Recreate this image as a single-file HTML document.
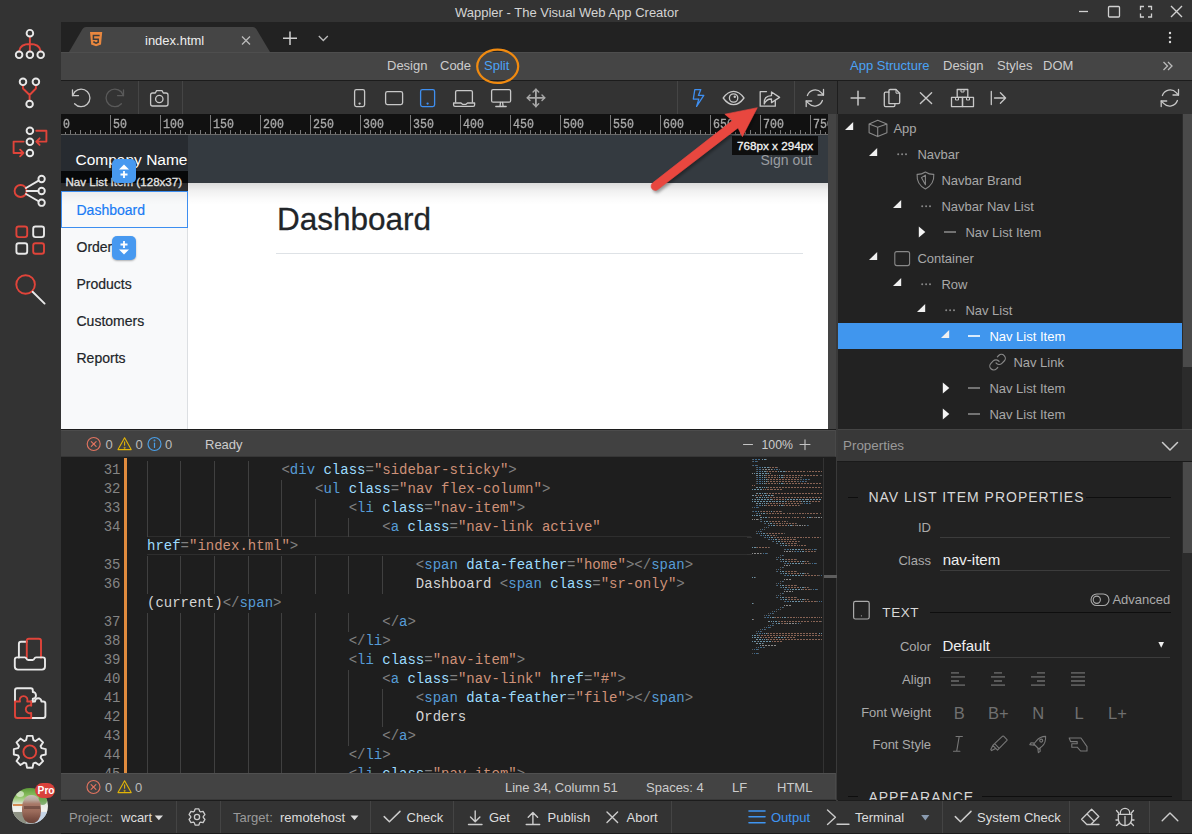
<!DOCTYPE html>
<html><head><meta charset="utf-8">
<style>
*{box-sizing:border-box;margin:0;padding:0}
html,body{width:1192px;height:834px;overflow:hidden;background:#333;font-family:"Liberation Sans",sans-serif;font-size:13px;color:#ccc}
.a{position:absolute}
.t{position:absolute;white-space:pre;line-height:13px}
svg{position:absolute;overflow:visible}
</style></head><body>

<!-- TITLE BAR -->
<div class="a" id="titlebar" style="left:0;top:0;width:1192px;height:22px;background:#333"></div>


<!-- LEFT BAR -->
<div class="a" id="leftbar" style="left:0;top:0;width:61px;height:834px;background:#333"></div>

<!-- TAB BAR -->
<div class="a" style="left:61px;top:22px;width:1131px;height:30px;background:#222"></div>

<!-- VIEW BAR -->
<div class="a" style="left:61px;top:52px;width:1131px;height:28px;background:#454545;border-top:1px solid #4e4e4e"></div>
<div class="a" style="left:61px;top:80px;width:1131px;height:1px;background:#1c1c1c"></div>

<!-- TOOLBAR -->
<div class="a" style="left:61px;top:81px;width:1131px;height:33px;background:#333"></div>

<!-- RULER -->
<div class="a" style="left:61px;top:114px;width:767px;height:21px;background:#111"></div>
<!-- design vscroll -->
<div class="a" style="left:828px;top:114px;width:9px;height:315px;background:#444"></div>


<!-- RULER CONTENT -->
<div class="a" style="left:61px;top:114px;width:767px;height:21px;overflow:hidden"><svg style="left:0;top:0" width="767" height="21" shape-rendering="crispEdges"><rect x="0" y="0" width="767" height="21" fill="#111"/><rect x="0" y="20" width="767" height="1" fill="#6a6a6a"/><path d="M4.5 18V20 M9.5 16V20 M14.5 18V20 M19.5 16V20 M24.5 18V20 M29.5 16V20 M34.5 18V20 M39.5 16V20 M44.5 18V20 M49.5 1V20 M54.5 18V20 M59.5 16V20 M64.5 18V20 M69.5 16V20 M74.5 18V20 M79.5 16V20 M84.5 18V20 M89.5 16V20 M94.5 18V20 M99.5 1V20 M104.5 18V20 M109.5 16V20 M114.5 18V20 M119.5 16V20 M124.5 18V20 M129.5 16V20 M134.5 18V20 M139.5 16V20 M144.5 18V20 M149.5 1V20 M154.5 18V20 M159.5 16V20 M164.5 18V20 M169.5 16V20 M174.5 18V20 M179.5 16V20 M184.5 18V20 M189.5 16V20 M194.5 18V20 M199.5 1V20 M204.5 18V20 M209.5 16V20 M214.5 18V20 M219.5 16V20 M224.5 18V20 M229.5 16V20 M234.5 18V20 M239.5 16V20 M244.5 18V20 M249.5 1V20 M254.5 18V20 M259.5 16V20 M264.5 18V20 M269.5 16V20 M274.5 18V20 M279.5 16V20 M284.5 18V20 M289.5 16V20 M294.5 18V20 M299.5 1V20 M304.5 18V20 M309.5 16V20 M314.5 18V20 M319.5 16V20 M324.5 18V20 M329.5 16V20 M334.5 18V20 M339.5 16V20 M344.5 18V20 M349.5 1V20 M354.5 18V20 M359.5 16V20 M364.5 18V20 M369.5 16V20 M374.5 18V20 M379.5 16V20 M384.5 18V20 M389.5 16V20 M394.5 18V20 M399.5 1V20 M404.5 18V20 M409.5 16V20 M414.5 18V20 M419.5 16V20 M424.5 18V20 M429.5 16V20 M434.5 18V20 M439.5 16V20 M444.5 18V20 M449.5 1V20 M454.5 18V20 M459.5 16V20 M464.5 18V20 M469.5 16V20 M474.5 18V20 M479.5 16V20 M484.5 18V20 M489.5 16V20 M494.5 18V20 M499.5 1V20 M504.5 18V20 M509.5 16V20 M514.5 18V20 M519.5 16V20 M524.5 18V20 M529.5 16V20 M534.5 18V20 M539.5 16V20 M544.5 18V20 M549.5 1V20 M554.5 18V20 M559.5 16V20 M564.5 18V20 M569.5 16V20 M574.5 18V20 M579.5 16V20 M584.5 18V20 M589.5 16V20 M594.5 18V20 M599.5 1V20 M604.5 18V20 M609.5 16V20 M614.5 18V20 M619.5 16V20 M624.5 18V20 M629.5 16V20 M634.5 18V20 M639.5 16V20 M644.5 18V20 M649.5 1V20 M654.5 18V20 M659.5 16V20 M664.5 18V20 M669.5 16V20 M674.5 18V20 M679.5 16V20 M684.5 18V20 M689.5 16V20 M694.5 18V20 M699.5 1V20 M704.5 18V20 M709.5 16V20 M714.5 18V20 M719.5 16V20 M724.5 18V20 M729.5 16V20 M734.5 18V20 M739.5 16V20 M744.5 18V20 M749.5 1V20 M754.5 18V20 M759.5 16V20 M764.5 18V20" stroke="#7a7a7a" stroke-width="1" fill="none"/></svg><div class="t" style="left:-61px;margin-left:63px;top:5.5px;font-family:'Liberation Mono',monospace;font-size:12.6px;line-height:10px;color:#a8a8a8;-webkit-text-stroke:0.35px #a8a8a8;transform:scaleX(0.92);transform-origin:0 0">0</div><div class="t" style="left:-61px;margin-left:113px;top:5.5px;font-family:'Liberation Mono',monospace;font-size:12.6px;line-height:10px;color:#a8a8a8;-webkit-text-stroke:0.35px #a8a8a8;transform:scaleX(0.92);transform-origin:0 0">50</div><div class="t" style="left:-61px;margin-left:163px;top:5.5px;font-family:'Liberation Mono',monospace;font-size:12.6px;line-height:10px;color:#a8a8a8;-webkit-text-stroke:0.35px #a8a8a8;transform:scaleX(0.92);transform-origin:0 0">100</div><div class="t" style="left:-61px;margin-left:213px;top:5.5px;font-family:'Liberation Mono',monospace;font-size:12.6px;line-height:10px;color:#a8a8a8;-webkit-text-stroke:0.35px #a8a8a8;transform:scaleX(0.92);transform-origin:0 0">150</div><div class="t" style="left:-61px;margin-left:263px;top:5.5px;font-family:'Liberation Mono',monospace;font-size:12.6px;line-height:10px;color:#a8a8a8;-webkit-text-stroke:0.35px #a8a8a8;transform:scaleX(0.92);transform-origin:0 0">200</div><div class="t" style="left:-61px;margin-left:313px;top:5.5px;font-family:'Liberation Mono',monospace;font-size:12.6px;line-height:10px;color:#a8a8a8;-webkit-text-stroke:0.35px #a8a8a8;transform:scaleX(0.92);transform-origin:0 0">250</div><div class="t" style="left:-61px;margin-left:363px;top:5.5px;font-family:'Liberation Mono',monospace;font-size:12.6px;line-height:10px;color:#a8a8a8;-webkit-text-stroke:0.35px #a8a8a8;transform:scaleX(0.92);transform-origin:0 0">300</div><div class="t" style="left:-61px;margin-left:413px;top:5.5px;font-family:'Liberation Mono',monospace;font-size:12.6px;line-height:10px;color:#a8a8a8;-webkit-text-stroke:0.35px #a8a8a8;transform:scaleX(0.92);transform-origin:0 0">350</div><div class="t" style="left:-61px;margin-left:463px;top:5.5px;font-family:'Liberation Mono',monospace;font-size:12.6px;line-height:10px;color:#a8a8a8;-webkit-text-stroke:0.35px #a8a8a8;transform:scaleX(0.92);transform-origin:0 0">400</div><div class="t" style="left:-61px;margin-left:513px;top:5.5px;font-family:'Liberation Mono',monospace;font-size:12.6px;line-height:10px;color:#a8a8a8;-webkit-text-stroke:0.35px #a8a8a8;transform:scaleX(0.92);transform-origin:0 0">450</div><div class="t" style="left:-61px;margin-left:563px;top:5.5px;font-family:'Liberation Mono',monospace;font-size:12.6px;line-height:10px;color:#a8a8a8;-webkit-text-stroke:0.35px #a8a8a8;transform:scaleX(0.92);transform-origin:0 0">500</div><div class="t" style="left:-61px;margin-left:613px;top:5.5px;font-family:'Liberation Mono',monospace;font-size:12.6px;line-height:10px;color:#a8a8a8;-webkit-text-stroke:0.35px #a8a8a8;transform:scaleX(0.92);transform-origin:0 0">550</div><div class="t" style="left:-61px;margin-left:663px;top:5.5px;font-family:'Liberation Mono',monospace;font-size:12.6px;line-height:10px;color:#a8a8a8;-webkit-text-stroke:0.35px #a8a8a8;transform:scaleX(0.92);transform-origin:0 0">600</div><div class="t" style="left:-61px;margin-left:713px;top:5.5px;font-family:'Liberation Mono',monospace;font-size:12.6px;line-height:10px;color:#a8a8a8;-webkit-text-stroke:0.35px #a8a8a8;transform:scaleX(0.92);transform-origin:0 0">650</div><div class="t" style="left:-61px;margin-left:763px;top:5.5px;font-family:'Liberation Mono',monospace;font-size:12.6px;line-height:10px;color:#a8a8a8;-webkit-text-stroke:0.35px #a8a8a8;transform:scaleX(0.92);transform-origin:0 0">700</div><div class="t" style="left:-61px;margin-left:813px;top:5.5px;font-family:'Liberation Mono',monospace;font-size:12.6px;line-height:10px;color:#a8a8a8;-webkit-text-stroke:0.35px #a8a8a8;transform:scaleX(0.92);transform-origin:0 0">750</div></div>
<!-- CANVAS -->
<div class="a" style="left:61px;top:135px;width:767px;height:294px;background:#fff;overflow:hidden">
  <div class="a" style="left:0;top:0;width:767px;height:48px;background:#343a40"></div>
  <div class="a" style="left:0;top:0;width:127px;height:48px;background:#272b30"></div>
  <div class="t" style="left:14.5px;top:16.5px;font-size:15.5px;line-height:15.5px;color:#fff">Company Name</div>
  <div class="t" style="left:699.5px;top:18px;font-size:14px;line-height:14px;color:#9a9da0">Sign out</div>
  <div class="a" style="left:0;top:48px;width:126px;height:246px;background:#f8f9fa;border-right:1px solid #dcdfe2;width:127px"></div>
  <div class="a" style="left:0;top:48px;width:767px;height:22px;background:linear-gradient(rgba(0,0,0,0.14),rgba(0,0,0,0.06) 35%,rgba(0,0,0,0.015) 75%,rgba(0,0,0,0))"></div>
  <div class="a" style="left:0;top:56px;width:127px;height:37px;border:1px solid #3d8ef0"></div>
  <div class="t" style="left:15.5px;top:68px;font-size:14px;line-height:14px;color:#1a7cf4;-webkit-text-stroke:0.2px #1a7cf4">Dashboard</div>
  <div class="t" style="left:15.5px;top:105px;font-size:14px;line-height:14px;color:#212529;-webkit-text-stroke:0.2px #212529">Orders</div>
  <div class="t" style="left:15.5px;top:142px;font-size:14px;line-height:14px;color:#212529;-webkit-text-stroke:0.2px #212529">Products</div>
  <div class="t" style="left:15.5px;top:179px;font-size:14px;line-height:14px;color:#212529;-webkit-text-stroke:0.2px #212529">Customers</div>
  <div class="t" style="left:15.5px;top:216px;font-size:14px;line-height:14px;color:#212529;-webkit-text-stroke:0.2px #212529">Reports</div>
  <div class="t" style="left:216px;top:68.5px;font-size:31.5px;line-height:31.5px;color:#212529;-webkit-text-stroke:0.3px #212529">Dashboard</div>
  <div class="a" style="left:215px;top:118px;width:527px;height:1px;background:#dee2e6"></div>
  <div class="a" style="left:0;top:36px;width:127px;height:20px;background:rgba(0,0,0,0.8)"></div>
  <div class="t" style="left:4.5px;top:40.8px;font-size:11.6px;line-height:11px;color:#e4e4e4;-webkit-text-stroke:0.3px #e4e4e4">Nav List Item (128x37)</div>
</div>
<!-- handles -->
<div class="a" style="left:112px;top:159px;width:24px;height:24px;border-radius:5px;background:#4799f0;box-shadow:0 1px 2px rgba(0,0,0,.3)"></div>
<div class="a" style="left:112px;top:236px;width:24px;height:24px;border-radius:5px;background:#4799f0;box-shadow:0 1px 2px rgba(0,0,0,.3)"></div>
<svg style="left:0;top:0" width="300" height="300">
  <path d="M119 169.5 L124 164.5 L129 169.5 Z" fill="#fff"/>
  <path d="M124 171 V178 M120.5 174.5 H127.5" stroke="#fff" stroke-width="1.8"/>
  <path d="M119 249.5 L124 254.5 L129 249.5 Z" fill="#fff"/>
  <path d="M124 241 V248 M120.5 244.5 H127.5" stroke="#fff" stroke-width="1.8"/>
</svg>
<!-- tooltip -->
<div class="a" style="left:732px;top:136px;width:86px;height:18.5px;background:#0e0e0e"></div>
<div class="t" style="left:737px;top:140.3px;font-size:11.7px;line-height:11px;color:#f4f4f4;-webkit-text-stroke:0.3px #f4f4f4">768px x 294px</div>


<!-- DESIGN STATUS -->
<div class="a" style="left:61px;top:429px;width:776px;height:1px;background:#1c1c1c"></div>
<div class="a" style="left:61px;top:430px;width:775px;height:27px;background:#414141;border-top:1px solid #4c4c4c;border-bottom:1px solid #363636;border-right:1px solid #484848"></div>
<div class="a" style="left:61px;top:457px;width:775px;height:1px;background:#3a3a3a"></div>

<!-- CODE -->
<div class="a" style="left:61px;top:457px;width:776px;height:316px;background:#1e1e1e"></div>
<!--CODESTART-->
<div class="a" style="left:61px;top:458px;width:762px;height:315px;overflow:hidden;background:#1e1e1e">
<div class="a" style="left:63px;top:0;width:3px;height:315px;background:#e08b3e"></div>
<div class="a" style="left:86px;top:78px;width:604px;height:19px;border-top:1px solid #2e2e2e;border-bottom:1px solid #2e2e2e"></div>
<div class="a" style="left:86px;top:3px;width:1px;height:19px;background:#404040"></div>
<div class="a" style="left:119px;top:3px;width:1px;height:19px;background:#404040"></div>
<div class="a" style="left:153px;top:3px;width:1px;height:19px;background:#404040"></div>
<div class="a" style="left:187px;top:3px;width:1px;height:19px;background:#404040"></div>
<div class="a" style="left:86px;top:22px;width:1px;height:19px;background:#404040"></div>
<div class="a" style="left:119px;top:22px;width:1px;height:19px;background:#404040"></div>
<div class="a" style="left:153px;top:22px;width:1px;height:19px;background:#404040"></div>
<div class="a" style="left:187px;top:22px;width:1px;height:19px;background:#404040"></div>
<div class="a" style="left:220px;top:22px;width:1px;height:19px;background:#404040"></div>
<div class="a" style="left:86px;top:41px;width:1px;height:19px;background:#404040"></div>
<div class="a" style="left:119px;top:41px;width:1px;height:19px;background:#404040"></div>
<div class="a" style="left:153px;top:41px;width:1px;height:19px;background:#404040"></div>
<div class="a" style="left:187px;top:41px;width:1px;height:19px;background:#404040"></div>
<div class="a" style="left:220px;top:41px;width:1px;height:19px;background:#404040"></div>
<div class="a" style="left:254px;top:41px;width:1px;height:19px;background:#404040"></div>
<div class="a" style="left:86px;top:60px;width:1px;height:19px;background:#404040"></div>
<div class="a" style="left:119px;top:60px;width:1px;height:19px;background:#404040"></div>
<div class="a" style="left:153px;top:60px;width:1px;height:19px;background:#404040"></div>
<div class="a" style="left:187px;top:60px;width:1px;height:19px;background:#404040"></div>
<div class="a" style="left:220px;top:60px;width:1px;height:19px;background:#404040"></div>
<div class="a" style="left:254px;top:60px;width:1px;height:19px;background:#404040"></div>
<div class="a" style="left:287px;top:60px;width:1px;height:19px;background:#404040"></div>
<div class="a" style="left:86px;top:98px;width:1px;height:19px;background:#404040"></div>
<div class="a" style="left:119px;top:98px;width:1px;height:19px;background:#404040"></div>
<div class="a" style="left:153px;top:98px;width:1px;height:19px;background:#404040"></div>
<div class="a" style="left:187px;top:98px;width:1px;height:19px;background:#404040"></div>
<div class="a" style="left:220px;top:98px;width:1px;height:19px;background:#404040"></div>
<div class="a" style="left:254px;top:98px;width:1px;height:19px;background:#404040"></div>
<div class="a" style="left:287px;top:98px;width:1px;height:19px;background:#404040"></div>
<div class="a" style="left:321px;top:98px;width:1px;height:19px;background:#404040"></div>
<div class="a" style="left:86px;top:117px;width:1px;height:19px;background:#404040"></div>
<div class="a" style="left:119px;top:117px;width:1px;height:19px;background:#404040"></div>
<div class="a" style="left:153px;top:117px;width:1px;height:19px;background:#404040"></div>
<div class="a" style="left:187px;top:117px;width:1px;height:19px;background:#404040"></div>
<div class="a" style="left:220px;top:117px;width:1px;height:19px;background:#404040"></div>
<div class="a" style="left:254px;top:117px;width:1px;height:19px;background:#404040"></div>
<div class="a" style="left:287px;top:117px;width:1px;height:19px;background:#404040"></div>
<div class="a" style="left:321px;top:117px;width:1px;height:19px;background:#404040"></div>
<div class="a" style="left:86px;top:155px;width:1px;height:19px;background:#404040"></div>
<div class="a" style="left:119px;top:155px;width:1px;height:19px;background:#404040"></div>
<div class="a" style="left:153px;top:155px;width:1px;height:19px;background:#404040"></div>
<div class="a" style="left:187px;top:155px;width:1px;height:19px;background:#404040"></div>
<div class="a" style="left:220px;top:155px;width:1px;height:19px;background:#404040"></div>
<div class="a" style="left:254px;top:155px;width:1px;height:19px;background:#404040"></div>
<div class="a" style="left:287px;top:155px;width:1px;height:19px;background:#404040"></div>
<div class="a" style="left:86px;top:174px;width:1px;height:19px;background:#404040"></div>
<div class="a" style="left:119px;top:174px;width:1px;height:19px;background:#404040"></div>
<div class="a" style="left:153px;top:174px;width:1px;height:19px;background:#404040"></div>
<div class="a" style="left:187px;top:174px;width:1px;height:19px;background:#404040"></div>
<div class="a" style="left:220px;top:174px;width:1px;height:19px;background:#404040"></div>
<div class="a" style="left:254px;top:174px;width:1px;height:19px;background:#404040"></div>
<div class="a" style="left:86px;top:193px;width:1px;height:19px;background:#404040"></div>
<div class="a" style="left:119px;top:193px;width:1px;height:19px;background:#404040"></div>
<div class="a" style="left:153px;top:193px;width:1px;height:19px;background:#404040"></div>
<div class="a" style="left:187px;top:193px;width:1px;height:19px;background:#404040"></div>
<div class="a" style="left:220px;top:193px;width:1px;height:19px;background:#404040"></div>
<div class="a" style="left:254px;top:193px;width:1px;height:19px;background:#404040"></div>
<div class="a" style="left:86px;top:212px;width:1px;height:19px;background:#404040"></div>
<div class="a" style="left:119px;top:212px;width:1px;height:19px;background:#404040"></div>
<div class="a" style="left:153px;top:212px;width:1px;height:19px;background:#404040"></div>
<div class="a" style="left:187px;top:212px;width:1px;height:19px;background:#404040"></div>
<div class="a" style="left:220px;top:212px;width:1px;height:19px;background:#404040"></div>
<div class="a" style="left:254px;top:212px;width:1px;height:19px;background:#404040"></div>
<div class="a" style="left:287px;top:212px;width:1px;height:19px;background:#404040"></div>
<div class="a" style="left:86px;top:231px;width:1px;height:19px;background:#404040"></div>
<div class="a" style="left:119px;top:231px;width:1px;height:19px;background:#404040"></div>
<div class="a" style="left:153px;top:231px;width:1px;height:19px;background:#404040"></div>
<div class="a" style="left:187px;top:231px;width:1px;height:19px;background:#404040"></div>
<div class="a" style="left:220px;top:231px;width:1px;height:19px;background:#404040"></div>
<div class="a" style="left:254px;top:231px;width:1px;height:19px;background:#404040"></div>
<div class="a" style="left:287px;top:231px;width:1px;height:19px;background:#404040"></div>
<div class="a" style="left:321px;top:231px;width:1px;height:19px;background:#404040"></div>
<div class="a" style="left:86px;top:250px;width:1px;height:19px;background:#404040"></div>
<div class="a" style="left:119px;top:250px;width:1px;height:19px;background:#404040"></div>
<div class="a" style="left:153px;top:250px;width:1px;height:19px;background:#404040"></div>
<div class="a" style="left:187px;top:250px;width:1px;height:19px;background:#404040"></div>
<div class="a" style="left:220px;top:250px;width:1px;height:19px;background:#404040"></div>
<div class="a" style="left:254px;top:250px;width:1px;height:19px;background:#404040"></div>
<div class="a" style="left:287px;top:250px;width:1px;height:19px;background:#404040"></div>
<div class="a" style="left:321px;top:250px;width:1px;height:19px;background:#404040"></div>
<div class="a" style="left:86px;top:269px;width:1px;height:19px;background:#404040"></div>
<div class="a" style="left:119px;top:269px;width:1px;height:19px;background:#404040"></div>
<div class="a" style="left:153px;top:269px;width:1px;height:19px;background:#404040"></div>
<div class="a" style="left:187px;top:269px;width:1px;height:19px;background:#404040"></div>
<div class="a" style="left:220px;top:269px;width:1px;height:19px;background:#404040"></div>
<div class="a" style="left:254px;top:269px;width:1px;height:19px;background:#404040"></div>
<div class="a" style="left:287px;top:269px;width:1px;height:19px;background:#404040"></div>
<div class="a" style="left:86px;top:288px;width:1px;height:19px;background:#404040"></div>
<div class="a" style="left:119px;top:288px;width:1px;height:19px;background:#404040"></div>
<div class="a" style="left:153px;top:288px;width:1px;height:19px;background:#404040"></div>
<div class="a" style="left:187px;top:288px;width:1px;height:19px;background:#404040"></div>
<div class="a" style="left:220px;top:288px;width:1px;height:19px;background:#404040"></div>
<div class="a" style="left:254px;top:288px;width:1px;height:19px;background:#404040"></div>
<div class="a" style="left:86px;top:307px;width:1px;height:19px;background:#404040"></div>
<div class="a" style="left:119px;top:307px;width:1px;height:19px;background:#404040"></div>
<div class="a" style="left:153px;top:307px;width:1px;height:19px;background:#404040"></div>
<div class="a" style="left:187px;top:307px;width:1px;height:19px;background:#404040"></div>
<div class="a" style="left:220px;top:307px;width:1px;height:19px;background:#404040"></div>
<div class="a" style="left:254px;top:307px;width:1px;height:19px;background:#404040"></div>
<div class="t" style="left:0;width:59.5px;text-align:right;top:3px;line-height:19px;font-family:'Liberation Mono',monospace;font-size:14px;color:#858585">31</div>
<div class="t" style="left:86px;top:3px;line-height:19px;font-family:'Liberation Mono',monospace;font-size:14px">                <span style="color:#808080">&lt;</span><span style="color:#569cd6">div</span> <span style="color:#9cdcfe">class</span><span style="color:#808080">=</span><span style="color:#ce9178">&quot;sidebar-sticky&quot;</span><span style="color:#808080">&gt;</span></div>
<div class="t" style="left:0;width:59.5px;text-align:right;top:22px;line-height:19px;font-family:'Liberation Mono',monospace;font-size:14px;color:#858585">32</div>
<div class="t" style="left:86px;top:22px;line-height:19px;font-family:'Liberation Mono',monospace;font-size:14px">                    <span style="color:#808080">&lt;</span><span style="color:#569cd6">ul</span> <span style="color:#9cdcfe">class</span><span style="color:#808080">=</span><span style="color:#ce9178">&quot;nav flex-column&quot;</span><span style="color:#808080">&gt;</span></div>
<div class="t" style="left:0;width:59.5px;text-align:right;top:41px;line-height:19px;font-family:'Liberation Mono',monospace;font-size:14px;color:#858585">33</div>
<div class="t" style="left:86px;top:41px;line-height:19px;font-family:'Liberation Mono',monospace;font-size:14px">                        <span style="color:#808080">&lt;</span><span style="color:#569cd6">li</span> <span style="color:#9cdcfe">class</span><span style="color:#808080">=</span><span style="color:#ce9178">&quot;nav-item&quot;</span><span style="color:#808080">&gt;</span></div>
<div class="t" style="left:0;width:59.5px;text-align:right;top:60px;line-height:19px;font-family:'Liberation Mono',monospace;font-size:14px;color:#858585">34</div>
<div class="t" style="left:86px;top:60px;line-height:19px;font-family:'Liberation Mono',monospace;font-size:14px">                            <span style="color:#808080">&lt;</span><span style="color:#569cd6">a</span> <span style="color:#9cdcfe">class</span><span style="color:#808080">=</span><span style="color:#ce9178">&quot;nav-link active&quot;</span></div>
<div class="t" style="left:86px;top:79px;line-height:19px;font-family:'Liberation Mono',monospace;font-size:14px"><span style="color:#9cdcfe">href</span><span style="color:#808080">=</span><span style="color:#ce9178">&quot;index.html&quot;</span><span style="color:#808080">&gt;</span></div>
<div class="t" style="left:0;width:59.5px;text-align:right;top:98px;line-height:19px;font-family:'Liberation Mono',monospace;font-size:14px;color:#858585">35</div>
<div class="t" style="left:86px;top:98px;line-height:19px;font-family:'Liberation Mono',monospace;font-size:14px">                                <span style="color:#808080">&lt;</span><span style="color:#569cd6">span</span> <span style="color:#9cdcfe">data-feather</span><span style="color:#808080">=</span><span style="color:#ce9178">&quot;home&quot;</span><span style="color:#808080">&gt;</span><span style="color:#808080">&lt;/</span><span style="color:#569cd6">span</span><span style="color:#808080">&gt;</span></div>
<div class="t" style="left:0;width:59.5px;text-align:right;top:117px;line-height:19px;font-family:'Liberation Mono',monospace;font-size:14px;color:#858585">36</div>
<div class="t" style="left:86px;top:117px;line-height:19px;font-family:'Liberation Mono',monospace;font-size:14px">                                <span style="color:#d4d4d4">Dashboard </span><span style="color:#808080">&lt;</span><span style="color:#569cd6">span</span> <span style="color:#9cdcfe">class</span><span style="color:#808080">=</span><span style="color:#ce9178">&quot;sr-only&quot;</span><span style="color:#808080">&gt;</span></div>
<div class="t" style="left:86px;top:136px;line-height:19px;font-family:'Liberation Mono',monospace;font-size:14px"><span style="color:#d4d4d4">(current)</span><span style="color:#808080">&lt;/</span><span style="color:#569cd6">span</span><span style="color:#808080">&gt;</span></div>
<div class="t" style="left:0;width:59.5px;text-align:right;top:155px;line-height:19px;font-family:'Liberation Mono',monospace;font-size:14px;color:#858585">37</div>
<div class="t" style="left:86px;top:155px;line-height:19px;font-family:'Liberation Mono',monospace;font-size:14px">                            <span style="color:#808080">&lt;/</span><span style="color:#569cd6">a</span><span style="color:#808080">&gt;</span></div>
<div class="t" style="left:0;width:59.5px;text-align:right;top:174px;line-height:19px;font-family:'Liberation Mono',monospace;font-size:14px;color:#858585">38</div>
<div class="t" style="left:86px;top:174px;line-height:19px;font-family:'Liberation Mono',monospace;font-size:14px">                        <span style="color:#808080">&lt;/</span><span style="color:#569cd6">li</span><span style="color:#808080">&gt;</span></div>
<div class="t" style="left:0;width:59.5px;text-align:right;top:193px;line-height:19px;font-family:'Liberation Mono',monospace;font-size:14px;color:#858585">39</div>
<div class="t" style="left:86px;top:193px;line-height:19px;font-family:'Liberation Mono',monospace;font-size:14px">                        <span style="color:#808080">&lt;</span><span style="color:#569cd6">li</span> <span style="color:#9cdcfe">class</span><span style="color:#808080">=</span><span style="color:#ce9178">&quot;nav-item&quot;</span><span style="color:#808080">&gt;</span></div>
<div class="t" style="left:0;width:59.5px;text-align:right;top:212px;line-height:19px;font-family:'Liberation Mono',monospace;font-size:14px;color:#858585">40</div>
<div class="t" style="left:86px;top:212px;line-height:19px;font-family:'Liberation Mono',monospace;font-size:14px">                            <span style="color:#808080">&lt;</span><span style="color:#569cd6">a</span> <span style="color:#9cdcfe">class</span><span style="color:#808080">=</span><span style="color:#ce9178">&quot;nav-link&quot;</span> <span style="color:#9cdcfe">href</span><span style="color:#808080">=</span><span style="color:#ce9178">&quot;#&quot;</span><span style="color:#808080">&gt;</span></div>
<div class="t" style="left:0;width:59.5px;text-align:right;top:231px;line-height:19px;font-family:'Liberation Mono',monospace;font-size:14px;color:#858585">41</div>
<div class="t" style="left:86px;top:231px;line-height:19px;font-family:'Liberation Mono',monospace;font-size:14px">                                <span style="color:#808080">&lt;</span><span style="color:#569cd6">span</span> <span style="color:#9cdcfe">data-feather</span><span style="color:#808080">=</span><span style="color:#ce9178">&quot;file&quot;</span><span style="color:#808080">&gt;</span><span style="color:#808080">&lt;/</span><span style="color:#569cd6">span</span><span style="color:#808080">&gt;</span></div>
<div class="t" style="left:0;width:59.5px;text-align:right;top:250px;line-height:19px;font-family:'Liberation Mono',monospace;font-size:14px;color:#858585">42</div>
<div class="t" style="left:86px;top:250px;line-height:19px;font-family:'Liberation Mono',monospace;font-size:14px">                                <span style="color:#d4d4d4">Orders</span></div>
<div class="t" style="left:0;width:59.5px;text-align:right;top:269px;line-height:19px;font-family:'Liberation Mono',monospace;font-size:14px;color:#858585">43</div>
<div class="t" style="left:86px;top:269px;line-height:19px;font-family:'Liberation Mono',monospace;font-size:14px">                            <span style="color:#808080">&lt;/</span><span style="color:#569cd6">a</span><span style="color:#808080">&gt;</span></div>
<div class="t" style="left:0;width:59.5px;text-align:right;top:288px;line-height:19px;font-family:'Liberation Mono',monospace;font-size:14px;color:#858585">44</div>
<div class="t" style="left:86px;top:288px;line-height:19px;font-family:'Liberation Mono',monospace;font-size:14px">                        <span style="color:#808080">&lt;/</span><span style="color:#569cd6">li</span><span style="color:#808080">&gt;</span></div>
<div class="t" style="left:0;width:59.5px;text-align:right;top:307px;line-height:19px;font-family:'Liberation Mono',monospace;font-size:14px;color:#858585">45</div>
<div class="t" style="left:86px;top:307px;line-height:19px;font-family:'Liberation Mono',monospace;font-size:14px">                        <span style="color:#808080">&lt;</span><span style="color:#569cd6">li</span> <span style="color:#9cdcfe">class</span><span style="color:#808080">=</span><span style="color:#ce9178">&quot;nav-item&quot;</span><span style="color:#808080">&gt;</span></div>
</div>
<!--CODEEND-->


<!-- CODE STATUS -->
<div class="a" style="left:61px;top:773px;width:775px;height:27px;background:#434343;border-top:1px solid #505050;border-bottom:1px solid #383838;border-right:1px solid #4a4a4a"></div>

<!-- BOTTOM BAR -->
<div class="a" style="left:61px;top:800px;width:1131px;height:1px;background:#1c1c1c"></div>
<div class="a" style="left:61px;top:801px;width:1131px;height:33px;background:#333"></div>
<div class="a" style="left:61px;top:833px;width:1131px;height:1px;background:#1c1c1c"></div>

<!-- RIGHT PANEL -->
<div class="a" style="left:837px;top:114px;width:355px;height:315px;background:#222"></div>
<div class="a" style="left:836px;top:114px;width:2px;height:687px;background:#3a3a3a"></div>
<div class="a" style="left:838px;top:429px;width:354px;height:33px;background:#383838"></div>
<div class="a" style="left:837px;top:462px;width:355px;height:338px;background:#222"></div>


<!-- TOP CONTENT -->
<div class="t" style="left:455px;top:6px;color:#d4d4d4">Wappler - The Visual Web App Creator</div>
<svg style="left:0;top:0" width="1192" height="60" fill="none" stroke="#d0d0d0" stroke-width="1.3">
  <line x1="1079" y1="11.5" x2="1088" y2="11.5"/>
  <rect x="1108.5" y="6.5" width="11" height="10.5" rx="1"/>
  <path d="M1140.5 10 V6.5 H1144 M1148 6.5 H1151.5 V10 M1151.5 13.5 V17 H1148 M1144 17 H1140.5 V13.5"/>
  <path d="M1171 6 L1182 17 M1182 6 L1171 17" stroke-width="1.4"/>
  <!-- tab -->
  <path d="M69 52 L82.5 29 Q83.8 27 86 27 L253 27 Q255 27 256.3 29 L270 52 Z" fill="#454545" stroke="none"/>
  <!-- html5 icon -->
  <path d="M90 32 H102.2 L101 44.5 L96.1 46.2 L91.2 44.5 Z" fill="#e8873f" stroke="none"/>
  <path d="M99.6 35.4 H93.4 V39.2 H98.2 V42.3 L96.1 43.1 L94 42.3 V41.3" stroke="#3c3c3c" stroke-width="1.5"/>
  <path d="M242 36.5 L250 44.5 M250 36.5 L242 44.5" stroke="#bbb" stroke-width="1.3"/>
  <path d="M290 31.5 V45 M283 38.2 H297" stroke="#d0d0d0" stroke-width="1.5"/>
  <path d="M318.8 36 L323.3 40.5 L327.8 36" stroke="#bbb" stroke-width="1.3"/>
  <circle cx="1170" cy="33" r="1.2" fill="#ddd" stroke="none"/>
  <circle cx="1170" cy="37.6" r="1.2" fill="#ddd" stroke="none"/>
  <circle cx="1170" cy="42" r="1.2" fill="#ddd" stroke="none"/>
</svg>
<div class="t" style="left:145px;top:34px;color:#eee">index.html</div>

<!-- view bar text -->
<div class="t" style="left:387px;top:59px;color:#ccc">Design</div>
<div class="t" style="left:440px;top:59px;color:#ccc">Code</div>
<div class="t" style="left:484px;top:59px;color:#4ba3f5">Split</div>
<div class="t" style="left:850px;top:59px;color:#4ba3f5">App Structure</div>
<div class="t" style="left:943px;top:59px;color:#ccc">Design</div>
<div class="t" style="left:997px;top:59px;color:#ccc">Styles</div>
<div class="t" style="left:1043px;top:59px;color:#ccc">DOM</div>
<svg style="left:0;top:0" width="1192" height="120" fill="none" stroke="#ccc" stroke-width="1.3">
  <path d="M1163.5 62 L1167.5 66 L1163.5 70 M1168 62 L1172 66 L1168 70" stroke="#bbb"/>
  <ellipse cx="497.7" cy="66.3" rx="20.5" ry="16.6" stroke="#f08a10" stroke-width="2.2"/>
</svg>


<!-- TOOLBAR ICONS -->
<svg style="left:0;top:0" width="1192" height="120" fill="none" stroke="#c8c8c8" stroke-width="1.3" stroke-linecap="round" stroke-linejoin="round">
  <g stroke="#454545" stroke-width="1" stroke-linecap="butt">
    <line x1="138.5" y1="81" x2="138.5" y2="114"/>
    <line x1="182.5" y1="81" x2="182.5" y2="114"/>
    <line x1="677.5" y1="81" x2="677.5" y2="114"/>
    <line x1="794.5" y1="81" x2="794.5" y2="114"/>
  </g>
  <line x1="837.5" y1="81" x2="837.5" y2="114" stroke="#1e1e1e" stroke-width="1" stroke-linecap="butt"/>
  <!-- undo -->
  <path d="M72.5 89.8 V95.6 H78.5"/>
  <path d="M74.6 103.8 A8.8 8.8 0 1 0 74.8 91.8 L72.5 95.6"/>
  <!-- redo -->
  <g stroke="#5a5a5a">
  <path d="M123.5 89.8 V95.6 H117.5"/>
  <path d="M121.4 103.8 A8.8 8.8 0 1 1 121.2 91.8 L123.5 95.6"/>
  </g>
  <!-- camera -->
  <path d="M150.6 95 Q150.6 93 152.6 93 H155.3 L156.6 90.6 H162 L163.3 93 H166 Q168 93 168 95 V104 Q168 106 166 106 H152.6 Q150.6 106 150.6 104 Z"/>
  <circle cx="159.3" cy="99" r="3.7"/>
  <!-- devices -->
  <rect x="354.6" y="89.6" width="10" height="17" rx="1.8"/>
  <circle cx="359.6" cy="103.6" r="0.5" fill="#c8c8c8"/>
  <rect x="385.6" y="91.6" width="17" height="13" rx="1.8"/>
  <rect x="420.6" y="89.6" width="14" height="17" rx="1.8" stroke="#3f8ff0"/>
  <circle cx="427.6" cy="103.6" r="0.5" fill="#3f8ff0" stroke="#3f8ff0"/>
  <path d="M455.6 102 V92 Q455.6 90.6 457 90.6 H471 Q472.4 90.6 472.4 92 V102"/>
  <path d="M453.6 103 H461 L462.5 104.3 H466 L467.5 103 H474.6 V105 Q474.6 106.4 473.2 106.4 H455 Q453.6 106.4 453.6 105 Z"/>
  <rect x="491.6" y="89.6" width="19" height="12.6" rx="1.5"/>
  <path d="M500.5 102.4 L500 106.3 M502.6 102.4 L503.1 106.3 M495.8 106.5 H506.2"/>
  <g stroke="#a8a8a8" stroke-width="1.8">
  <path d="M527.5 97.8 H544.5 M535.9 89.5 V106.5"/>
  <path d="M530 95 L527.3 97.8 L530 100.6 M542 95 L544.7 97.8 L542 100.6 M533.1 92 L535.9 89.3 L538.7 92 M533.1 103.8 L535.9 106.6 L538.7 103.8" stroke-width="1.4"/>
  </g>
  <!-- zap -->
  <path d="M694.8 89.6 H700.8 L698.4 95.4 H703.8 L696.6 106.4 L698.8 99.1 H693.3 Z" stroke="#3f8ff0"/>
  <!-- eye -->
  <path d="M723.2 98 Q728 91.4 733.6 91.4 Q739.2 91.4 744 98 Q739.2 104.6 733.6 104.6 Q728 104.6 723.2 98 Z"/>
  <circle cx="733.6" cy="98" r="4.2"/>
  <circle cx="734.8" cy="96.8" r="1.2" fill="#c8c8c8" stroke="none"/>
  <!-- share -->
  <path d="M766.5 91.6 H760.2 V106.2 H775.3 V101"/>
  <path d="M764.2 104 Q763.5 95.8 771.5 95.6 V92 L779.6 97.4 L771.5 102.6 V99 Q766.5 98.8 764.2 104 Z"/>
  <!-- refresh -->
  <path d="M823.5 89.5 V95 H818"/>
  <path d="M806.2 106.5 V101 H811.7"/>
  <path d="M807.4 95.5 A8.2 8.2 0 0 1 821.2 92.6 L823.5 95 M806.2 101 L808.6 103.4 A8.2 8.2 0 0 0 822.4 100.5"/>
  <!-- right panel toolbar -->
  <path d="M858 91.2 V105 M851.1 98.1 H864.9" stroke-width="1.5"/>
  <path d="M888.9 103.6 V90.8 Q888.9 89.5 890.2 89.5 H896 L899.7 93.2 V102.3 Q899.7 103.6 898.4 103.6 Z"/>
  <path d="M896 89.5 V93.2 H899.7" stroke-width="1"/>
  <path d="M888.9 92.2 H885.6 Q884.3 92.2 884.3 93.5 V105.3 Q884.3 106.6 885.6 106.6 H893.6 Q894.9 106.6 894.9 105.3 V103.6"/>
  <path d="M920.4 92.8 L931.6 103.6 M931.6 92.8 L920.4 103.6" stroke-width="1.4"/>
  <rect x="957.2" y="89.5" width="10.6" height="7.9"/>
  <rect x="951.5" y="97.4" width="11" height="9.2"/>
  <rect x="962.5" y="97.4" width="11" height="9.2"/>
  <path d="M961 89.5 V92 H964 V89.5 M955.5 97.4 V100 H958.5 V97.4 M966.5 97.4 V100 H969.5 V97.4" stroke-width="1"/>
  <path d="M991.3 91.4 V104.6 M994.5 98 H1005.6 M1000.4 92.8 L1005.6 98 L1000.4 103.2"/>
  <path d="M1178.5 89.5 V95 H1173"/>
  <path d="M1161.2 106.5 V101 H1166.7"/>
  <path d="M1162.4 95.5 A8.2 8.2 0 0 1 1176.2 92.6 L1178.5 95 M1161.2 101 L1163.6 103.4 A8.2 8.2 0 0 0 1177.4 100.5"/>
</svg>


<!-- STATUS BARS CONTENT -->
<div class="t" style="left:105.5px;top:438px;color:#bbb">0</div>
<div class="t" style="left:135.5px;top:438px;color:#bbb">0</div>
<div class="t" style="left:165px;top:438px;color:#bbb">0</div>
<div class="t" style="left:205px;top:438px;color:#ccc">Ready</div>
<div class="t" style="left:761.5px;top:438.5px;color:#ccc;font-size:12.3px">100%</div>
<div class="t" style="left:105px;top:781px;color:#bbb">0</div>
<div class="t" style="left:135px;top:781px;color:#bbb">0</div>
<div class="t" style="left:505px;top:781px;color:#ccc">Line 34, Column 51</div>
<div class="t" style="left:646px;top:781px;color:#ccc">Spaces: 4</div>
<div class="t" style="left:732px;top:781px;color:#ccc">LF</div>
<div class="t" style="left:777px;top:781px;color:#ccc">HTML</div>
<!-- bottom bar text -->
<div class="t" style="left:69px;top:810.5px;color:#9a9a9a">Project:</div>
<div class="t" style="left:121px;top:810.5px;color:#ddd">wcart</div>
<div class="t" style="left:233px;top:810.5px;color:#9a9a9a">Target:</div>
<div class="t" style="left:280px;top:810.5px;color:#ddd">remotehost</div>
<div class="t" style="left:406.5px;top:810.5px;color:#ddd">Check</div>
<div class="t" style="left:489px;top:810.5px;color:#ddd">Get</div>
<div class="t" style="left:547.5px;top:810.5px;color:#ddd">Publish</div>
<div class="t" style="left:626.5px;top:810.5px;color:#ddd">Abort</div>
<div class="t" style="left:771px;top:810.5px;color:#3f95f2">Output</div>
<div class="t" style="left:855px;top:810.5px;color:#ddd">Terminal</div>
<div class="t" style="left:977px;top:810.5px;color:#ddd">System Check</div>
<svg style="left:0;top:420px" width="1192" height="414" fill="none" stroke="#ccc" stroke-width="1.3" stroke-linecap="round" stroke-linejoin="round">
 <g transform="translate(0,-420)">
  <!-- design status -->
  <circle cx="93.7" cy="444" r="6.5" stroke="#e0735f" stroke-width="1.15"/>
  <path d="M91.3 441.6 L96.1 446.4 M96.1 441.6 L91.3 446.4" stroke="#e0735f" stroke-width="1.15"/>
  <path d="M124.6 437.8 L131.2 449.6 H118 Z" stroke="#e2b407" stroke-width="1.1"/>
  <path d="M124.6 441.8 V445.2" stroke="#e2b407" stroke-width="1.1"/>
  <circle cx="124.6" cy="447.7" r="0.3" fill="#e2b407" stroke="#e2b407"/>
  <circle cx="154.5" cy="444" r="6.5" stroke="#4a9fe8" stroke-width="1.15"/>
  <path d="M154.5 443.2 V447.4" stroke="#4a9fe8" stroke-width="1.2"/>
  <circle cx="154.5" cy="440.5" r="0.3" fill="#4a9fe8" stroke="#4a9fe8"/>
  <path d="M743.5 444.5 H752.5 M800 444.5 H810 M805 439.8 V449.6" stroke="#c4c4c4" stroke-width="1.1"/>
  <!-- code status -->
  <circle cx="93.5" cy="787" r="6.5" stroke="#e0735f" stroke-width="1.15"/>
  <path d="M91.1 784.6 L95.9 789.4 M95.9 784.6 L91.1 789.4" stroke="#e0735f" stroke-width="1.15"/>
  <path d="M124.6 780.8 L131.2 792.6 H118 Z" stroke="#e2b407" stroke-width="1.1"/>
  <path d="M124.6 784.8 V788.2" stroke="#e2b407" stroke-width="1.1"/>
  <circle cx="124.6" cy="790.7" r="0.3" fill="#e2b407" stroke="#e2b407"/>
  <!-- bottom bar separators -->
  <g stroke="#444" stroke-width="1" stroke-linecap="butt">
   <line x1="176.5" y1="801" x2="176.5" y2="833"/>
   <line x1="220.5" y1="801" x2="220.5" y2="833"/>
   <line x1="370.5" y1="801" x2="370.5" y2="833"/>
   <line x1="453.5" y1="801" x2="453.5" y2="833"/>
   <line x1="671.5" y1="801" x2="671.5" y2="833"/>
   <line x1="942.5" y1="801" x2="942.5" y2="833"/>
   <line x1="1069.5" y1="801" x2="1069.5" y2="833"/>
   <line x1="1149.5" y1="801" x2="1149.5" y2="833"/>
  </g>
  <path d="M154.7 815.5 H163 L158.85 820.3 Z" fill="#ddd" stroke="none"/>
  <path d="M350.5 815.5 H358.5 L354.5 820.3 Z" fill="#ddd" stroke="none"/>
  <path d="M921.2 815 H929.4 L925.3 820.4 Z" fill="#8a9bb0" stroke="none"/>
  <!-- gear -->
  <path d="M194.34 811.29 L195.13 808.91 L198.87 808.91 L199.66 811.29 L200.61 811.84 L203.07 811.34 L204.94 814.57 L203.28 816.45 L203.28 817.55 L204.94 819.43 L203.07 822.66 L200.61 822.16 L199.66 822.71 L198.87 825.09 L195.13 825.09 L194.34 822.71 L193.39 822.16 L190.93 822.66 L189.06 819.43 L190.72 817.55 L190.72 816.45 L189.06 814.57 L190.93 811.34 L193.39 811.84Z" stroke-width="1.3"/>
  <circle cx="197" cy="817" r="2.6" stroke-width="1.3"/>
  <path d="M384.2 816.6 L389.4 821.8 L400 811.4" stroke-width="1.5"/>
  <path d="M475.2 811 V821.5 M470.5 817 L475.2 821.7 L479.9 817 M468.5 824.5 H482" stroke-width="1.4"/>
  <path d="M532.9 824 V813 M528.2 817.3 L532.9 812.5 L537.6 817.3 M526.2 824.5 H539.7" stroke-width="1.4"/>
  <path d="M607 812 L617.6 822.4 M617.6 812 L607 822.4" stroke-width="1.4"/>
  <path d="M749 811 H765 M749 816.8 H765 M749 822.7 H765" stroke="#3f95f2" stroke-width="1.6"/>
  <path d="M827.5 810 L835.4 817.2 L827.5 824.4 M837 824.2 H849" stroke-width="1.4"/>
  <path d="M955.3 816.6 L960.5 821.8 L971 811.4" stroke-width="1.5"/>
  <path d="M1081.6 819.3 L1091.6 809.3 L1098.8 816.5 L1090.8 824.5 H1086.8 Z M1087.1 814 L1093.5 820.6 M1090.8 824.5 H1099" />
  <path d="M1120.3 814.2 V813 A4.7 4.7 0 0 1 1129.7 813 V814.2 M1118.3 814.4 H1131.7 V819 A6.7 6.7 0 0 1 1118.3 819 Z M1125 816.5 V825.5 M1116 820 H1118.3 M1131.7 820 H1134 M1116.5 810.5 L1118.6 813 M1133.5 810.5 L1131.4 813 M1116.5 825.5 L1119 823 M1133.5 825.5 L1131 823"/>
  <path d="M1162.2 820.8 L1170 813 L1177.8 820.8" stroke-width="1.4"/>
 </g>
</svg>


<!-- TREE -->
<div class="a" style="left:837px;top:114px;width:1px;height:315px;background:#3a3a3a"></div>
<div class="a" style="left:838px;top:323px;width:344px;height:26px;background:#4096ee"></div>
<div class="a" style="left:1182px;top:114px;width:10px;height:315px;background:#2b2b2b"></div>
<div class="a" style="left:1183px;top:114px;width:9px;height:253px;background:#4a4a4a"></div>
<div class="t" style="left:893.4px;top:121.7px;color:#a8a8a8">App</div>
<div class="t" style="left:917.4px;top:147.7px;color:#a8a8a8">Navbar</div>
<div class="t" style="left:941.4px;top:173.7px;color:#a8a8a8">Navbar Brand</div>
<div class="t" style="left:941.4px;top:199.7px;color:#a8a8a8">Navbar Nav List</div>
<div class="t" style="left:965.4px;top:225.7px;color:#a8a8a8">Nav List Item</div>
<div class="t" style="left:917.4px;top:251.7px;color:#a8a8a8">Container</div>
<div class="t" style="left:941.4px;top:277.7px;color:#a8a8a8">Row</div>
<div class="t" style="left:965.4px;top:303.7px;color:#a8a8a8">Nav List</div>
<div class="t" style="left:989.4px;top:329.7px;color:#fff">Nav List Item</div>
<div class="t" style="left:1013.4px;top:355.7px;color:#a8a8a8">Nav Link</div>
<div class="t" style="left:989.4px;top:381.7px;color:#a8a8a8">Nav List Item</div>
<div class="t" style="left:989.4px;top:407.7px;color:#a8a8a8">Nav List Item</div>
<svg style="left:0;top:0" width="1192" height="440" fill="none" stroke="#888" stroke-width="1.1" stroke-linecap="round" stroke-linejoin="round">
<path d="M853.2 122 V130 H845 Z" fill="#f0f0f0" stroke="none"/>
<path d="M877.7 120.3 L886.9 124.1 V132.7 L877.7 136.6 L869.1 132.7 V124.1 Z M869.1 124.1 L877.7 127.3 L886.9 124.1 M877.7 127.3 V136.6" stroke="#888"/>
<path d="M877.2 148 V156 H869 Z" fill="#f0f0f0" stroke="none"/>
<circle cx="898.2" cy="154.3" r="1" fill="#888" stroke="none"/>
<circle cx="902.1" cy="154.3" r="1" fill="#888" stroke="none"/>
<circle cx="906.0" cy="154.3" r="1" fill="#888" stroke="none"/>
<path d="M925.4 172 Q929.5 174.6 933.8 174.4 Q934.4 184.5 925.4 188.9 Q916.4 184.5 917.1 174.4 Q921.3 174.6 925.4 172 Z M925.4 175.2 V184.8 L921.4 177.6 Z" stroke="#888"/>
<path d="M901.2 200 V208 H893 Z" fill="#f0f0f0" stroke="none"/>
<circle cx="922.2" cy="206.3" r="1" fill="#888" stroke="none"/>
<circle cx="926.1" cy="206.3" r="1" fill="#888" stroke="none"/>
<circle cx="930.0" cy="206.3" r="1" fill="#888" stroke="none"/>
<path d="M918.8 226.6 L925.3 232 L918.8 237.4 Z" fill="#f4f4f4" stroke="none"/>
<path d="M944 232 H956" stroke="#888" stroke-width="1.6" stroke-linecap="butt"/>
<path d="M877.2 252 V260 H869 Z" fill="#f0f0f0" stroke="none"/>
<rect x="894.8" y="251.6" width="14.8" height="14" rx="2" stroke="#888"/>
<path d="M901.2 278 V286 H893 Z" fill="#f0f0f0" stroke="none"/>
<circle cx="922.2" cy="284.3" r="1" fill="#888" stroke="none"/>
<circle cx="926.1" cy="284.3" r="1" fill="#888" stroke="none"/>
<circle cx="930.0" cy="284.3" r="1" fill="#888" stroke="none"/>
<path d="M925.2 304 V312 H917 Z" fill="#f0f0f0" stroke="none"/>
<circle cx="946.2" cy="310.3" r="1" fill="#888" stroke="none"/>
<circle cx="950.1" cy="310.3" r="1" fill="#888" stroke="none"/>
<circle cx="954.0" cy="310.3" r="1" fill="#888" stroke="none"/>
<path d="M949.2 330 V338 H941 Z" fill="#f0f0f0" stroke="none"/>
<path d="M968 336 H980" stroke="#fff" stroke-width="1.6" stroke-linecap="butt"/>
<g transform="translate(988.2,352.8) scale(0.78)" stroke="#888" stroke-width="1.5"><path d="M10 13a5 5 0 0 0 7.54.54l3-3a5 5 0 0 0-7.07-7.07l-1.72 1.71"/><path d="M14 11a5 5 0 0 0-7.54-.54l-3 3a5 5 0 0 0 7.07 7.07l1.71-1.71"/></g>
<path d="M942.8 382.6 L949.3 388 L942.8 393.4 Z" fill="#f4f4f4" stroke="none"/>
<path d="M968 388 H980" stroke="#888" stroke-width="1.6" stroke-linecap="butt"/>
<path d="M942.8 408.6 L949.3 414 L942.8 419.4 Z" fill="#f4f4f4" stroke="none"/>
<path d="M968 414 H980" stroke="#888" stroke-width="1.6" stroke-linecap="butt"/>
</svg>

<!-- PROPS -->
<div class="a" style="left:838px;top:429px;width:354px;height:1px;background:#454545"></div>
<div class="a" style="left:837px;top:461px;width:355px;height:1px;background:#1a1a1a"></div>
<div class="t" style="left:843px;top:438.6px;font-size:13.4px;line-height:13px;color:#9a9a9a">Properties</div>
<div class="a" style="left:1182px;top:462px;width:10px;height:338px;background:#2b2b2b"></div>
<div class="a" style="left:1183px;top:462px;width:9px;height:91px;background:#4a4a4a"></div>
<div class="t" style="left:868.4px;top:490.4px;font-size:14px;line-height:14px;color:#d8d8d8;letter-spacing:1px">NAV LIST ITEM PROPERTIES</div>
<div class="a" style="left:848px;top:497px;width:10px;height:1px;background:#0e0e0e"></div>
<div class="a" style="left:1086px;top:497px;width:85px;height:1px;background:#0e0e0e"></div>
<div class="t" style="right:261px;top:520.7px;font-size:13px;line-height:13px;color:#aaa">ID</div>
<div class="a" style="left:940px;top:537px;width:230px;height:1px;background:#3c3c3c"></div>
<div class="t" style="right:261px;top:553.8px;font-size:13px;line-height:13px;color:#aaa">Class</div>
<div class="t" style="left:942.7px;top:552.3px;font-size:15px;line-height:15px;color:#f0f0f0;">nav-item</div>
<div class="a" style="left:940px;top:570px;width:230px;height:1px;background:#3c3c3c"></div>
<div class="t" style="left:1112.4px;top:592.6px;font-size:13px;line-height:13px;color:#aaa;">Advanced</div>
<div class="t" style="left:882.3px;top:605.6px;font-size:13.5px;line-height:13.5px;color:#d8d8d8;letter-spacing:0.6px">TEXT</div>
<div class="a" style="left:930px;top:612px;width:241px;height:1px;background:#0e0e0e"></div>
<div class="t" style="right:261px;top:639.9px;font-size:13px;line-height:13px;color:#aaa">Color</div>
<div class="t" style="left:942.4px;top:637.9px;font-size:15px;line-height:15px;color:#f0f0f0;">Default</div>
<div class="a" style="left:940px;top:657px;width:230px;height:1px;background:#3c3c3c"></div>
<div class="t" style="right:261px;top:672.7px;font-size:13px;line-height:13px;color:#aaa">Align</div>
<div class="t" style="right:261px;top:705.7px;font-size:13px;line-height:13px;color:#aaa">Font Weight</div>
<div class="t" style="right:261px;top:738.0px;font-size:13px;line-height:13px;color:#aaa">Font Style</div>
<div class="t" style="left:953.7px;top:704.6px;font-size:16.5px;line-height:16.5px;color:#707070;">B</div>
<div class="t" style="left:988px;top:704.6px;font-size:16.5px;line-height:16.5px;color:#707070;">B+</div>
<div class="t" style="left:1032.2px;top:704.6px;font-size:16.5px;line-height:16.5px;color:#707070;">N</div>
<div class="t" style="left:1074.5px;top:704.6px;font-size:16.5px;line-height:16.5px;color:#707070;">L</div>
<div class="t" style="left:1108.1px;top:704.6px;font-size:16.5px;line-height:16.5px;color:#707070;">L+</div>
<div class="a" style="left:837px;top:462px;width:345px;height:338px;overflow:hidden"><div class="a" style="left:-837px;top:-462px;width:1192px;height:834px"><div class="t" style="left:868.4px;top:789.6px;font-size:14px;line-height:14px;color:#d8d8d8;letter-spacing:1px">APPEARANCE</div></div></div>
<div class="a" style="left:848px;top:796px;width:10px;height:1px;background:#0e0e0e"></div>
<div class="a" style="left:982px;top:796px;width:190px;height:1px;background:#0e0e0e"></div>
<svg style="left:0;top:0" width="1192" height="800" fill="none" stroke="#ccc" stroke-width="1.3" stroke-linecap="round" stroke-linejoin="round">
<path d="M1162.5 442.5 L1170 450 L1177.5 442.5" stroke-width="1.5"/>
<rect x="1091" y="594" width="18" height="11.5" rx="5.75" stroke="#aaa" stroke-width="1.1"/>
<circle cx="1096.8" cy="599.75" r="3.6" stroke="#aaa" stroke-width="1.1"/>
<rect x="853.6" y="601.4" width="15.6" height="17.6" rx="1.8" stroke="#aaa" stroke-width="1.2"/>
<circle cx="861.4" cy="615.8" r="0.6" fill="#aaa" stroke="none"/>
<path d="M1158.4 642 H1164 L1161.2 647.8 Z" fill="#eee" stroke="none"/>
<path d="M951 672.8H959M951 676.9H965M951 681.0H959M951 685.1H965" stroke="#5a5a5a" stroke-width="1.8" stroke-linecap="butt"/>
<path d="M994 672.8H1002M991 676.9H1005M994 681.0H1002M991 685.1H1005" stroke="#5a5a5a" stroke-width="1.8" stroke-linecap="butt"/>
<path d="M1037 672.8H1045M1031 676.9H1045M1037 681.0H1045M1031 685.1H1045" stroke="#5a5a5a" stroke-width="1.8" stroke-linecap="butt"/>
<path d="M1071 672.8H1085M1071 676.9H1085M1071 681.0H1085M1071 685.1H1085" stroke="#5a5a5a" stroke-width="1.8" stroke-linecap="butt"/>
<g stroke="#777" stroke-width="1.1">
<path d="M956 736.5 H962.4 M953.5 751.2 H959.9 M959.2 736.5 L956.7 751.2"/>
<path d="M1003.6 736.2 L1007 739.6 Q1007.3 740 1007 740.4 L999.2 748.3 L994.6 743.7 L1002.6 736.2 Q1003.1 735.8 1003.6 736.2 Z M994.6 743.7 L992.8 745.4 L997.5 750.1 L999.2 748.3 M992.8 745.4 L990.8 749.6 L991.6 750.6 L995.6 748.4"/>
<path d="M1045.6 736.4 Q1040 736.6 1036.6 740.6 L1033.8 744 L1038.8 749 L1042.2 746.2 Q1046 742.8 1045.6 736.4 Z M1034.6 743 L1031 742.8 L1029.8 744.6 L1034.4 745.2 M1040 748 L1040.2 751.4 L1038.4 752.6 L1037.8 748.2"/><circle cx="1041.2" cy="740.6" r="1.5"/>
<path d="M1069.2 738 H1081 L1087 746.6 V751 H1080.6 L1077.2 747.2 H1071.8 V743.8 H1077.2 V741.6 H1070.6 Z"/>
</g>
</svg>

<!-- MINIMAP -->
<svg style="left:0;top:0" width="1192" height="834" shape-rendering="crispEdges">
<path d="M752 459h1M766 459h1M752 461h1M757 461h1M752 465h1M757 465h1M756 467h1M769 467h1M777 467h1M756 469h1M762 469h1M772 469h2M779 469h1M756 471h1M766 471h1M785 471h1M767 473h1M765 475h1M783 475h1M820 475h1M821 475h1M756 477h1M765 477h1M783 477h1M800 477h1M801 477h1M756 479h1M767 479h1M800 479h1M801 479h2M809 479h1M756 481h1M767 481h1M797 481h1M798 481h2M806 481h1M756 483h1M765 483h1M783 483h1M767 487h1M766 493h1M767 497h1M754 499h1M758 499h1M773 501h1M767 503h1M801 503h1M802 503h2M810 503h1M756 505h1M765 505h1M783 505h1M799 505h1M752 507h2M758 507h1M752 511h1M760 511h1M773 511h1M781 511h1M756 513h1M766 513h1M768 517h1M811 517h1M815 517h1M758 519h2M761 519h1M760 521h1M769 521h1M787 521h1M764 523h1M773 523h1M796 523h1M768 525h1M776 525h1M792 525h1M796 525h1M805 525h2M808 525h1M764 527h2M768 527h1M760 529h2M764 529h1M756 531h2M761 531h1M756 533h1M766 533h1M784 533h1M760 535h1M770 535h1M776 535h1M764 537h1M774 537h1M820 537h1M768 539h1M778 539h1M795 539h1M772 541h1M781 541h1M799 541h1M776 543h1M785 543h1M796 543h1M780 545h1M788 545h1M756 547h1M769 547h1M784 549h1M802 549h1M809 549h1M810 549h2M816 549h1M794 551h1M805 551h1M815 551h1M761 553h2M767 553h1M780 555h2M783 555h1M776 557h2M780 557h1M776 559h1M785 559h1M796 559h1M780 561h1M788 561h1M804 561h1M808 561h1M784 563h1M802 563h1M809 563h1M810 563h2M816 563h1M780 567h2M783 567h1M776 569h2M780 569h1M776 571h1M785 571h1M796 571h1M780 573h1M788 573h1M804 573h1M808 573h1M784 575h1M802 575h1M818 575h1M819 575h2M755 577h1M780 581h2M783 581h1M776 583h2M780 583h1M776 585h1M785 585h1M796 585h1M780 587h1M788 587h1M804 587h1M808 587h1M784 589h1M802 589h1M810 589h1M811 589h2M817 589h1M780 593h2M783 593h1M776 595h2M780 595h1M776 597h1M785 597h1M796 597h1M780 599h1M788 599h1M804 599h1M808 599h1M784 601h1M802 601h1M816 601h1M817 601h2M753 603h1M780 607h2M783 607h1M776 609h2M780 609h1M772 611h2M776 611h1M768 613h2M773 613h1M764 615h2M769 615h1M764 617h1M774 617h1M787 617h1M778 621h1M821 621h1M772 623h1M781 623h1M786 623h1M796 623h2M800 623h1M768 625h2M773 625h1M764 627h2M770 627h1M760 629h2M765 629h1M756 631h2M761 631h1M756 633h1M767 633h1M758 635h1M767 639h1M757 641h1M763 643h1M756 647h2M764 647h1M752 649h2M758 649h1M752 653h2M758 653h1" stroke="#808080" stroke-width="1" stroke-opacity="0.6" stroke-dasharray="1 0.5" transform="translate(0,0.5)"/>
<path d="M753 459h8M753 461h4M753 465h4M757 467h4M757 469h5M774 469h5M757 471h4M757 477h4M757 479h6M803 479h6M757 481h6M800 481h6M757 483h4M804 503h6M757 505h4M754 507h4M753 511h4M757 513h3M760 519h1M761 521h2M765 523h2M769 525h1M807 525h1M766 527h2M762 529h2M758 531h3M757 533h3M761 535h3M765 537h3M769 539h3M773 541h2M777 543h2M781 545h1M785 549h4M812 549h4M795 551h4M763 553h4M782 555h1M778 557h2M777 559h2M781 561h1M785 563h4M812 563h4M782 567h1M778 569h2M777 571h2M781 573h1M785 575h4M821 575h1M782 581h1M778 583h2M777 585h2M781 587h1M785 589h4M813 589h4M782 593h1M778 595h2M777 597h2M781 599h1M785 601h4M819 601h3M782 607h1M778 609h2M774 611h2M770 613h3M766 615h3M765 617h4M773 623h2M798 623h2M770 625h3M766 627h4M762 629h3M758 631h3M757 633h6M758 647h6M754 649h4M754 653h4" stroke="#569cd6" stroke-width="1" stroke-opacity="0.6" stroke-dasharray="1 0.5" transform="translate(0,0.5)"/>
<path d="M762 459h4M762 467h7M762 471h4M778 471h7M754 473h13M768 473h2M757 475h4M762 475h3M779 475h4M762 477h3M779 477h4M764 479h3M764 481h3M762 483h3M779 483h4M757 487h6M764 487h3M752 489h11M757 493h4M762 493h4M753 495h3M763 495h10M757 497h6M764 497h3M752 499h2M755 499h3M759 499h13M785 499h20M806 499h1M808 499h14M752 501h21M774 501h12M801 501h9M757 503h6M764 503h3M762 505h3M779 505h4M758 511h2M771 511h2M761 513h5M752 515h1M754 515h6M761 517h1M763 517h5M807 517h4M764 521h5M768 523h5M771 525h5M788 525h4M761 533h5M765 535h5M769 537h5M773 539h5M776 541h5M780 543h5M783 545h5M752 547h4M790 549h12M800 551h5M780 559h5M783 561h5M800 561h4M790 563h12M780 571h5M783 573h5M800 573h4M790 575h12M752 577h3M780 585h5M783 587h5M800 587h4M790 589h12M780 597h5M783 599h5M800 599h4M790 601h12M752 603h1M770 617h4M782 617h5M752 619h1M769 621h3M773 621h5M776 623h5M764 633h3M819 633h3M752 635h6M752 637h9M776 637h9M757 639h6M764 639h3M752 641h5M758 641h14M757 643h6" stroke="#9cdcfe" stroke-width="1" stroke-opacity="0.6" stroke-dasharray="1 0.5" transform="translate(0,0.5)"/>
<path d="M770 467h7M767 471h10M786 471h20M807 471h15M770 473h2M766 475h12M784 475h35M766 477h12M784 477h15M768 479h32M768 481h29M766 483h12M784 483h38M752 485h1M754 485h2M768 487h54M763 489h1M765 489h7M772 489h11M767 493h55M756 495h1M758 495h5M773 495h2M768 497h54M772 499h1M774 499h11M786 501h1M788 501h13M810 501h11M768 503h33M766 505h12M784 505h15M761 511h9M774 511h7M767 513h7M775 513h11M787 513h9M797 513h7M805 513h14M820 513h2M760 515h2M769 517h13M783 517h8M792 517h8M801 517h5M812 517h3M770 521h11M782 521h5M774 523h9M784 523h12M777 525h10M793 525h3M767 533h17M771 535h5M775 537h9M785 537h6M792 537h10M803 537h8M812 537h8M779 539h16M782 541h4M787 541h12M786 543h10M789 545h9M799 545h7M757 547h12M803 549h6M806 551h9M786 559h10M789 561h10M805 561h3M803 563h6M786 571h10M789 573h10M805 573h3M803 575h15M786 585h10M789 587h10M805 587h3M803 589h7M786 597h10M789 599h10M805 599h3M803 601h13M775 617h6M788 617h9M798 617h10M809 617h9M819 617h3M753 619h2M779 621h7M787 621h23M811 621h10M782 623h4M768 633h50M759 635h63M761 637h1M763 637h13M785 637h11M768 639h54M772 641h11" stroke="#ce9178" stroke-width="1" stroke-opacity="0.6" stroke-dasharray="1 0.5" transform="translate(0,0.5)"/>
<path d="M763 469h9M752 473h1M756 475h1M756 487h1M756 493h1M752 495h1M756 497h1M805 499h1M807 499h1M756 503h1M760 517h1M816 517h6M752 519h1M754 519h4M797 525h4M802 525h3M784 551h9M752 553h9M784 565h6M784 579h8M784 591h9M784 605h7M768 621h1M787 623h9M756 639h1M756 643h1M760 645h17" stroke="#d4d4d4" stroke-width="1" stroke-opacity="0.6" stroke-dasharray="1 0.5" transform="translate(0,0.5)"/>
</svg>
<div class="a" style="left:823px;top:458px;width:1px;height:315px;background:#333"></div>
<div class="a" style="left:824px;top:575px;width:13px;height:3px;background:#5e5e5e"></div>
<div class="a" style="left:747px;top:537px;width:5px;height:1px;background:#333"></div>
<div class="a" style="left:747px;top:554px;width:5px;height:1px;background:#333"></div>

<!-- LEFT BAR ICONS -->
<svg style="left:0;top:0" width="61" height="834" fill="none" stroke-width="1.9" stroke-linecap="round" stroke-linejoin="round">
<path d="M29.9 37.5 V50.8 M19.3 50.6 Q20.5 44 29.9 44 Q39.3 44 40.5 50.6" stroke="#e0443a"/>
<circle cx="29.9" cy="33.2" r="3.3" stroke="#e8e8e8"/>
<circle cx="19.1" cy="54.8" r="3.3" stroke="#e8e8e8"/>
<circle cx="29.9" cy="54.8" r="3.3" stroke="#e8e8e8"/>
<circle cx="40.7" cy="54.8" r="3.3" stroke="#e8e8e8"/>
<path d="M23 85.6 V88.5 L29.6 95 V100.3 M35.9 85.6 V88.5 L29.6 95" stroke="#e0443a"/>
<circle cx="23" cy="81.8" r="3.3" stroke="#e8e8e8"/>
<circle cx="35.9" cy="81.8" r="3.3" stroke="#e8e8e8"/>
<circle cx="29.6" cy="104" r="3.3" stroke="#e8e8e8"/>
<path d="M36.3 130.8 H46.4 V141.6 H36.3 M39.6 138.3 L36.3 141.6 L39.6 144.9 M23.6 141.6 H13.6 V153 H23.4 M20.1 149.7 L23.4 153 L20.1 156.3" stroke="#e0443a"/>
<circle cx="29.9" cy="130.8" r="3.3" stroke="#e8e8e8"/>
<circle cx="29.9" cy="141.8" r="3.3" stroke="#e8e8e8"/>
<circle cx="29.9" cy="153" r="3.3" stroke="#e8e8e8"/>
<circle cx="20.6" cy="191" r="6" stroke="#e0443a"/>
<path d="M26 188 L38.6 180.6 M26.6 191 H38.3 M26 194 L38.6 201.2" stroke="#e8e8e8"/>
<circle cx="41.6" cy="179" r="3.2" stroke="#e8e8e8"/>
<circle cx="41.6" cy="191" r="3.2" stroke="#e8e8e8"/>
<circle cx="41.6" cy="202.7" r="3.2" stroke="#e8e8e8"/>
<rect x="16.4" y="226.5" width="10.8" height="10.6" rx="2.3" stroke="#e0443a"/>
<rect x="33.2" y="226.5" width="10.8" height="10.6" rx="2.3" stroke="#e8e8e8"/>
<rect x="16.4" y="243.2" width="10.8" height="10.6" rx="2.3" stroke="#e8e8e8"/>
<rect x="33.2" y="243.2" width="10.8" height="10.6" rx="2.3" stroke="#e0443a"/>
<circle cx="25.6" cy="284.5" r="9.3" stroke="#e0443a"/>
<path d="M32.6 291.8 L44.6 303.6" stroke="#e8e8e8"/>
<path d="M26.8 641.8 H21 Q18.9 641.8 18.9 643.9 V657.5" stroke="#e8e8e8"/>
<path d="M26.8 657.8 V640.8 Q26.8 638.7 28.9 638.7 H38.9 Q41 638.7 41 640.8 V657.8" stroke="#e0443a"/>
<path d="M17.2 657.4 H24.8 Q26 657.4 26.4 658.6 Q26.8 660 28.2 660 H32.6 Q34 660 34.4 658.6 Q34.8 657.4 36 657.4 H42.8 Q45 657.4 45 659.6 V666.6 Q45 669.6 42 669.6 H17.8 Q14.8 669.6 14.8 666.6 V659.6 Q14.8 657.4 17.2 657.4 Z" stroke="#e8e8e8"/>
<path d="M15 701 V690.5 Q15 688.3 17.2 688.3 H30.8 Q32.8 688.3 32.8 690.3 V692 A3.2 3.4 0 0 1 32.8 698.8 V701.5" stroke="#e8e8e8"/>
<path d="M31.2 718 H43.1 Q45.4 718 45.4 715.7 V703.8 Q45.4 701.5 43.1 701.5 H41.4 A3.2 3.2 0 0 0 35 701.5 H31.2" stroke="#e8e8e8"/>
<path d="M15 701.5 V715.7 Q15 718 17.3 718 H31.2 V712.9 A3.9 3.9 0 1 1 31.2 705.7 V701.5 H27.2 A3.9 3.9 0 1 0 20 701.5 Z" stroke="#e0443a"/>
<path d="M41.46 748.19 L45.77 749.06 L45.77 754.54 L41.46 755.41 L40.59 757.49 L43.03 761.15 L39.15 765.03 L35.49 762.59 L33.41 763.46 L32.54 767.77 L27.06 767.77 L26.19 763.46 L24.11 762.59 L20.45 765.03 L16.57 761.15 L19.01 757.49 L18.14 755.41 L13.83 754.54 L13.83 749.06 L18.14 748.19 L19.01 746.11 L16.57 742.45 L20.45 738.57 L24.11 741.01 L26.19 740.14 L27.06 735.83 L32.54 735.83 L33.41 740.14 L35.49 741.01 L39.15 738.57 L43.03 742.45 L40.59 746.11 Z" stroke="#e8e8e8" stroke-width="1.9"/>
<circle cx="29.8" cy="751.8" r="6.4" stroke="#e0443a" stroke-width="1.9"/>
</svg>
<div class="a" style="left:11.9px;top:788.3px;width:36px;height:36px;border-radius:50%;overflow:hidden;background:linear-gradient(#5e9a3a 0,#8cc060 22%,#b8d8a0 36%,#e8ece4 46%,#f4f4f0 62%,#d8dcd8 78%,#a8b0b0 100%)"><div class="a" style="left:4px;top:3px;width:8px;height:6px;border-radius:50%;background:#e8f0e0;opacity:.7"></div><div class="a" style="left:26px;top:8px;width:9px;height:9px;border-radius:50%;background:#4a8a30;opacity:.6"></div><div class="a" style="left:1px;top:15.5px;width:10px;height:2.5px;background:#d07838;opacity:.85"></div><div class="a" style="left:0;top:24px;width:14px;height:14px;background:#8e9284"></div><div class="a" style="left:23px;top:24px;width:14px;height:14px;background:#c4d4e6"></div><div class="a" style="left:10.5px;top:6.5px;width:19px;height:28px;border-radius:46% 46% 42% 42%;background:linear-gradient(#c8c0b8 0,#b8a89c 18%,#a87868 32%,#9a6a5a 60%,#7a4e42 85%,#6a443a 100%)"></div><div class="a" style="left:12px;top:17.5px;width:16px;height:3px;background:#4a2c28;opacity:.45"></div></div>
<div class="a" style="left:35.3px;top:783px;width:19.8px;height:15px;border-radius:7.5px;background:#d9413c"></div>
<div class="t" style="left:37.6px;top:785.3px;font-size:10.2px;line-height:11px;font-weight:700;color:#fff">Pro</div>

<!-- RED ARROW -->
<svg style="left:0;top:0" width="1192" height="300">
 <defs><filter id="sh" x="-20%" y="-20%" width="140%" height="140%"><feGaussianBlur stdDeviation="1.6"/></filter></defs>
 <path d="M652.74 182.87 L732.38 120.58 L724.80 114.20 L757.30 107.70 L742.40 136.70 L737.99 127.88 L657.86 189.53 A4.2 4.2 0 0 1 652.74 182.87 Z" fill="rgba(0,0,0,0.35)" transform="translate(1.5,2.5)" filter="url(#sh)"/>
 <path d="M652.74 182.87 L732.38 120.58 L724.80 114.20 L757.30 107.70 L742.40 136.70 L737.99 127.88 L657.86 189.53 A4.2 4.2 0 0 1 652.74 182.87 Z" fill="#e8473f" stroke="#e8473f" stroke-width="0.6" stroke-linejoin="round"/>
</svg>

</body></html>
